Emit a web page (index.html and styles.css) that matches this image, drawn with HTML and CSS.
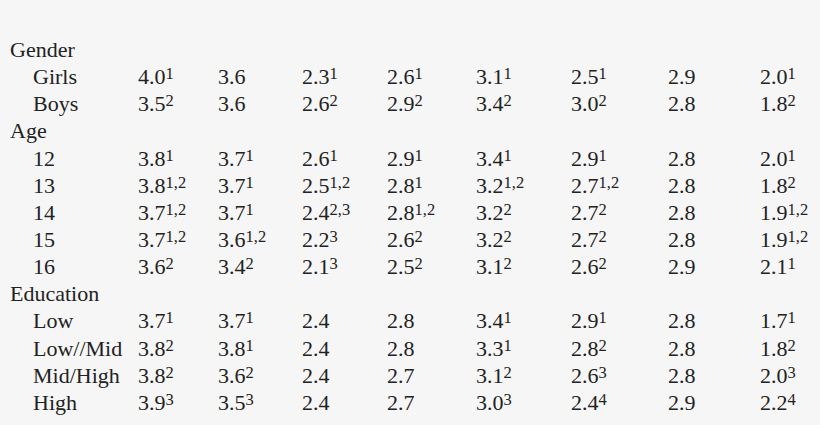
FILE: index.html
```html
<!DOCTYPE html>
<html>
<head>
<meta charset="utf-8">
<link rel="stylesheet" href="styles.css">
</head>
<body>
<div class="table">
  <div class="cat">Gender</div>
  <div class="lab">Girls</div><div>4.0<sup>1</sup></div><div>3.6</div><div>2.3<sup>1</sup></div><div>2.6<sup>1</sup></div><div>3.1<sup>1</sup></div><div>2.5<sup>1</sup></div><div>2.9</div><div>2.0<sup>1</sup></div>
  <div class="lab">Boys</div><div>3.5<sup>2</sup></div><div>3.6</div><div>2.6<sup>2</sup></div><div>2.9<sup>2</sup></div><div>3.4<sup>2</sup></div><div>3.0<sup>2</sup></div><div>2.8</div><div>1.8<sup>2</sup></div>
  <div class="cat">Age</div>
  <div class="lab">12</div><div>3.8<sup>1</sup></div><div>3.7<sup>1</sup></div><div>2.6<sup>1</sup></div><div>2.9<sup>1</sup></div><div>3.4<sup>1</sup></div><div>2.9<sup>1</sup></div><div>2.8</div><div>2.0<sup>1</sup></div>
  <div class="lab">13</div><div>3.8<sup>1,2</sup></div><div>3.7<sup>1</sup></div><div>2.5<sup>1,2</sup></div><div>2.8<sup>1</sup></div><div>3.2<sup>1,2</sup></div><div>2.7<sup>1,2</sup></div><div>2.8</div><div>1.8<sup>2</sup></div>
  <div class="lab">14</div><div>3.7<sup>1,2</sup></div><div>3.7<sup>1</sup></div><div>2.4<sup>2,3</sup></div><div>2.8<sup>1,2</sup></div><div>3.2<sup>2</sup></div><div>2.7<sup>2</sup></div><div>2.8</div><div>1.9<sup>1,2</sup></div>
  <div class="lab">15</div><div>3.7<sup>1,2</sup></div><div>3.6<sup>1,2</sup></div><div>2.2<sup>3</sup></div><div>2.6<sup>2</sup></div><div>3.2<sup>2</sup></div><div>2.7<sup>2</sup></div><div>2.8</div><div>1.9<sup>1,2</sup></div>
  <div class="lab">16</div><div>3.6<sup>2</sup></div><div>3.4<sup>2</sup></div><div>2.1<sup>3</sup></div><div>2.5<sup>2</sup></div><div>3.1<sup>2</sup></div><div>2.6<sup>2</sup></div><div>2.9</div><div>2.1<sup>1</sup></div>
  <div class="cat">Education</div>
  <div class="lab">Low</div><div>3.7<sup>1</sup></div><div>3.7<sup>1</sup></div><div>2.4</div><div>2.8</div><div>3.4<sup>1</sup></div><div>2.9<sup>1</sup></div><div>2.8</div><div>1.7<sup>1</sup></div>
  <div class="lab">Low//Mid</div><div>3.8<sup>2</sup></div><div>3.8<sup>1</sup></div><div>2.4</div><div>2.8</div><div>3.3<sup>1</sup></div><div>2.8<sup>2</sup></div><div>2.8</div><div>1.8<sup>2</sup></div>
  <div class="lab">Mid/High</div><div>3.8<sup>2</sup></div><div>3.6<sup>2</sup></div><div>2.4</div><div>2.7</div><div>3.1<sup>2</sup></div><div>2.6<sup>3</sup></div><div>2.8</div><div>2.0<sup>3</sup></div>
  <div class="lab">High</div><div>3.9<sup>3</sup></div><div>3.5<sup>3</sup></div><div>2.4</div><div>2.7</div><div>3.0<sup>3</sup></div><div>2.4<sup>4</sup></div><div>2.9</div><div>2.2<sup>4</sup></div>
</div>
</body>
</html>
```
FILE: styles.css
```css
html, body {
  margin: 0;
  padding: 0;
  background: #f6f6f6;
}
body {
  width: 820px;
  height: 425px;
  overflow: hidden;
  color: #222222;
  font-family: "Liberation Serif", "Times New Roman", serif;
  font-size: 22px;
}
.table {
  display: grid;
  grid-template-columns: 128px 80px 84px 85px 89px 95px 97px 92px 1fr;
  grid-auto-rows: 27.15px;
  line-height: 27.15px;
  padding: 36px 0 0 10px;
  white-space: nowrap;
}
.cat {
  grid-column: 1 / -1;
}
.lab {
  padding-left: 23px;
}
sup {
  font-size: 16.5px;
  line-height: 0;
  vertical-align: 5px;
}
```
